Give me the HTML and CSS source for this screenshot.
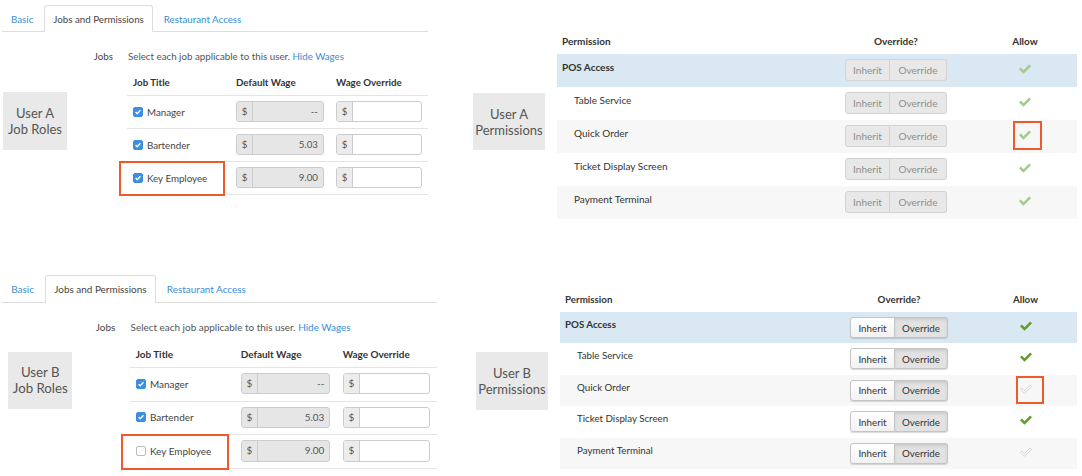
FILE: index.html
```html
<!DOCTYPE html>
<html lang="en">
<head>
  <meta charset="UTF-8">
  <meta name="viewport" content="width=device-width, initial-scale=1.0">
  <title>Job roles and permissions</title>
  <link rel="stylesheet" href="styles.css">
</head>
<body>
<div class="sheet">

  <!-- user A : jobs -->
  <section class="jobs">
    <div class="tabs">
      <a class="tab">Basic</a>
      <a class="tab active">Jobs and Permissions</a>
      <a class="tab">Restaurant Access</a>
    </div>
    <div class="jobs-body">
      <div class="jobs-side">
        <div class="jobs-label">Jobs</div>
        <div class="note">User A<br>Job Roles</div>
      </div>
      <div class="jobs-main">
        <p class="jobs-intro">Select each job applicable to this user. <a>Hide Wages</a></p>
        <div class="job-row job-head">
          <div class="cell">Job Title</div>
          <div class="cell">Default Wage</div>
          <div class="cell">Wage Override</div>
        </div>
        <div class="job-row">
          <div class="cell"><span class="box on"><svg viewBox="0 0 8 8"><path d="M1.6 4.1 3.2 5.7 6.4 2.3"/></svg></span>Manager</div>
          <div class="cell"><div class="money locked"><span class="addon">$</span><span class="val">--</span></div></div>
          <div class="cell"><div class="money"><span class="addon">$</span><span class="val"></span></div></div>
        </div>
        <div class="job-row">
          <div class="cell"><span class="box on"><svg viewBox="0 0 8 8"><path d="M1.6 4.1 3.2 5.7 6.4 2.3"/></svg></span>Bartender</div>
          <div class="cell"><div class="money locked"><span class="addon">$</span><span class="val">5.03</span></div></div>
          <div class="cell"><div class="money"><span class="addon">$</span><span class="val"></span></div></div>
        </div>
        <div class="job-row">
          <div class="cell"><span class="box on"><svg viewBox="0 0 8 8"><path d="M1.6 4.1 3.2 5.7 6.4 2.3"/></svg></span>Key Employee<span class="mark mark-job"></span></div>
          <div class="cell"><div class="money locked"><span class="addon">$</span><span class="val">9.00</span></div></div>
          <div class="cell"><div class="money"><span class="addon">$</span><span class="val"></span></div></div>
        </div>
      </div>
    </div>
  </section>

  <!-- user A : permissions -->
  <section class="perms">
    <div class="note">User A<br>Permissions</div>
    <div class="perm-table">
      <div class="perm-row perm-head">
        <div class="cell name">Permission</div>
        <div class="cell">Override?</div>
        <div class="cell allow">Allow</div>
      </div>
      <div class="perm-row group">
        <div class="cell name">POS Access</div>
        <div class="cell"><div class="toggle"><span class="inh">Inherit</span><span class="ovr">Override</span></div></div>
        <div class="cell allow"><svg class="tick faded" viewBox="0 0 12 10"><path d="M0 5.3 1.8 3.5 4.5 6.2 10.2 0.5 12 2.3 4.5 9.8z"/></svg></div>
      </div>
      <div class="perm-row">
        <div class="cell name sub">Table Service</div>
        <div class="cell"><div class="toggle"><span class="inh">Inherit</span><span class="ovr">Override</span></div></div>
        <div class="cell allow"><svg class="tick faded" viewBox="0 0 12 10"><path d="M0 5.3 1.8 3.5 4.5 6.2 10.2 0.5 12 2.3 4.5 9.8z"/></svg></div>
      </div>
      <div class="perm-row stripe">
        <div class="cell name sub">Quick Order</div>
        <div class="cell"><div class="toggle"><span class="inh">Inherit</span><span class="ovr">Override</span></div></div>
        <div class="cell allow"><svg class="tick faded" viewBox="0 0 12 10"><path d="M0 5.3 1.8 3.5 4.5 6.2 10.2 0.5 12 2.3 4.5 9.8z"/></svg><span class="mark mark-perm"></span></div>
      </div>
      <div class="perm-row">
        <div class="cell name sub">Ticket Display Screen</div>
        <div class="cell"><div class="toggle"><span class="inh">Inherit</span><span class="ovr">Override</span></div></div>
        <div class="cell allow"><svg class="tick faded" viewBox="0 0 12 10"><path d="M0 5.3 1.8 3.5 4.5 6.2 10.2 0.5 12 2.3 4.5 9.8z"/></svg></div>
      </div>
      <div class="perm-row stripe">
        <div class="cell name sub">Payment Terminal</div>
        <div class="cell"><div class="toggle"><span class="inh">Inherit</span><span class="ovr">Override</span></div></div>
        <div class="cell allow"><svg class="tick faded" viewBox="0 0 12 10"><path d="M0 5.3 1.8 3.5 4.5 6.2 10.2 0.5 12 2.3 4.5 9.8z"/></svg></div>
      </div>
    </div>
  </section>

  <!-- user B : jobs -->
  <section class="jobs jobs-b">
    <div class="tabs">
      <a class="tab">Basic</a>
      <a class="tab active">Jobs and Permissions</a>
      <a class="tab">Restaurant Access</a>
    </div>
    <div class="jobs-body">
      <div class="jobs-side">
        <div class="jobs-label">Jobs</div>
        <div class="note">User B<br>Job Roles</div>
      </div>
      <div class="jobs-main">
        <p class="jobs-intro">Select each job applicable to this user. <a>Hide Wages</a></p>
        <div class="job-row job-head">
          <div class="cell">Job Title</div>
          <div class="cell">Default Wage</div>
          <div class="cell">Wage Override</div>
        </div>
        <div class="job-row">
          <div class="cell"><span class="box on"><svg viewBox="0 0 8 8"><path d="M1.6 4.1 3.2 5.7 6.4 2.3"/></svg></span>Manager</div>
          <div class="cell"><div class="money locked"><span class="addon">$</span><span class="val">--</span></div></div>
          <div class="cell"><div class="money"><span class="addon">$</span><span class="val"></span></div></div>
        </div>
        <div class="job-row">
          <div class="cell"><span class="box on"><svg viewBox="0 0 8 8"><path d="M1.6 4.1 3.2 5.7 6.4 2.3"/></svg></span>Bartender</div>
          <div class="cell"><div class="money locked"><span class="addon">$</span><span class="val">5.03</span></div></div>
          <div class="cell"><div class="money"><span class="addon">$</span><span class="val"></span></div></div>
        </div>
        <div class="job-row">
          <div class="cell"><span class="box"></span>Key Employee<span class="mark mark-job"></span></div>
          <div class="cell"><div class="money locked"><span class="addon">$</span><span class="val">9.00</span></div></div>
          <div class="cell"><div class="money"><span class="addon">$</span><span class="val"></span></div></div>
        </div>
      </div>
    </div>
  </section>

  <!-- user B : permissions -->
  <section class="perms perms-b">
    <div class="note">User B<br>Permissions</div>
    <div class="perm-table">
      <div class="perm-row perm-head">
        <div class="cell name">Permission</div>
        <div class="cell">Override?</div>
        <div class="cell allow">Allow</div>
      </div>
      <div class="perm-row group">
        <div class="cell name">POS Access</div>
        <div class="cell"><div class="toggle"><span class="inh">Inherit</span><span class="ovr">Override</span></div></div>
        <div class="cell allow"><svg class="tick on" viewBox="0 0 12 10"><path d="M0 5.3 1.8 3.5 4.5 6.2 10.2 0.5 12 2.3 4.5 9.8z"/></svg></div>
      </div>
      <div class="perm-row">
        <div class="cell name sub">Table Service</div>
        <div class="cell"><div class="toggle"><span class="inh">Inherit</span><span class="ovr">Override</span></div></div>
        <div class="cell allow"><svg class="tick on" viewBox="0 0 12 10"><path d="M0 5.3 1.8 3.5 4.5 6.2 10.2 0.5 12 2.3 4.5 9.8z"/></svg></div>
      </div>
      <div class="perm-row stripe">
        <div class="cell name sub">Quick Order</div>
        <div class="cell"><div class="toggle"><span class="inh">Inherit</span><span class="ovr">Override</span></div></div>
        <div class="cell allow"><svg class="tick off" viewBox="0 0 12 10"><path d="M0.5 5.3 1.8 4 4.5 6.7 10.2 1 11.5 2.3 4.5 9.3z"/></svg><span class="mark mark-perm"></span></div>
      </div>
      <div class="perm-row">
        <div class="cell name sub">Ticket Display Screen</div>
        <div class="cell"><div class="toggle"><span class="inh">Inherit</span><span class="ovr">Override</span></div></div>
        <div class="cell allow"><svg class="tick on" viewBox="0 0 12 10"><path d="M0 5.3 1.8 3.5 4.5 6.2 10.2 0.5 12 2.3 4.5 9.8z"/></svg></div>
      </div>
      <div class="perm-row stripe">
        <div class="cell name sub">Payment Terminal</div>
        <div class="cell"><div class="toggle"><span class="inh">Inherit</span><span class="ovr">Override</span></div></div>
        <div class="cell allow"><svg class="tick off" viewBox="0 0 12 10"><path d="M0.5 5.3 1.8 4 4.5 6.7 10.2 1 11.5 2.3 4.5 9.3z"/></svg></div>
      </div>
    </div>
  </section>

</div>
</body>
</html>
```

FILE: styles.css
```css
body{
  margin: 0;
  background: #fff;
  font-family: Lato, "Liberation Sans", sans-serif;
  font-size: 10px;
  color: #333;
  overflow: hidden;
}
a{
  color: #3a8dd4;
  text-decoration: none;
  cursor: pointer;
}

.sheet{
  display: grid;
  grid-template-columns: 445px 637px;
  grid-template-rows: 262px 214px;
}

/* grey labels and red highlight boxes */
.note{
  display: flex;
  align-items: center;
  justify-content: center;
  flex: none;
  text-align: center;
  background: #e9e9e9;
  color: #555;
  font-size: 13px;
  line-height: 16px;
}
.mark{
  position: absolute;
  box-sizing: border-box;
  border: 2px solid #ee5a29;
}
.mark-job{
  left: -8px;
  top: -1px;
  width: 106px;
  height: 35px;
}
.mark-perm{
  left: 66px;
  top: 1px;
  width: 29px;
  height: 29px;
}
.perms-b .mark-perm{
  left: 68px;
  width: 28px;
  height: 28px;
}

/* jobs panel */
.jobs{
  width: 426px;
  padding: 5px 0 0 2px;
  font-size: 9.75px;
}
.jobs-b{
  zoom: 1.02;
  padding-top: 13px;
}
.tabs{
  display: flex;
  border-bottom: 1px solid #ddd;
}
.tab{
  height: 26px;
  line-height: 26px;
  padding: 0 8px;
  margin: 0 2px -1px 0;
  border: 1px solid transparent;
  border-bottom: 0;
  border-radius: 3px 3px 0 0;
}
.tab.active{
  color: #444;
  background: #fff;
  border-color: #ddd;
}
.jobs-body{
  display: flex;
}
.jobs-side{
  width: 125px;
  flex: none;
}
.jobs-label{
  margin-top: 17px;
  padding-right: 14px;
  text-align: right;
  line-height: 14px;
  color: #444;
}
.jobs-side .note{
  width: 64px;
  height: 58px;
  margin: 29px 0 0 1px;
}
.jobs-b .jobs-side .note{
  width: 63px;
  height: 56px;
  margin: 17px 0 0 6px;
}
.jobs-main{
  flex: 1;
}
.jobs-intro{
  margin: 17px 0 0;
  padding-left: 1px;
  line-height: 14px;
  color: #555;
}
.job-row{
  display: grid;
  grid-template-columns: 103px 100px 98px;
  border-bottom: 1px solid #e4e4e4;
}
.job-row .cell{
  position: relative;
  display: flex;
  align-items: center;
  padding: 5px 6px 6px;
  color: #444;
}
.job-head .cell{
  padding: 12px 6px 6px;
  line-height: 14px;
  font-weight: bold;
  color: #333;
}
.box{
  display: flex;
  align-items: center;
  justify-content: center;
  width: 10px;
  height: 10px;
  box-sizing: border-box;
  margin-right: 4px;
  border: 1px solid #bbb;
  border-radius: 2px;
  background: #fff;
}
.box.on{
  background: #3b8fe3;
  border-color: #3b8fe3;
}
.box svg{
  width: 8px;
  height: 8px;
  fill: none;
  stroke: #fff;
  stroke-width: 1.4;
}
.money{
  display: flex;
  width: 100%;
  height: 21px;
  box-sizing: border-box;
  border: 1px solid #ccc;
  border-radius: 3px;
  overflow: hidden;
  background: #fff;
  color: #555;
  line-height: 19px;
}
.money .addon{
  width: 15px;
  flex: none;
  text-align: center;
  background: #ececec;
  border-right: 1px solid #ccc;
}
.money .val{
  flex: 1;
  text-align: right;
  padding-right: 5px;
}
.money.locked,
.money.locked .addon{
  background: #e6e6e6;
}

/* permissions panel */
.perms{
  display: flex;
  align-items: flex-start;
  padding: 29px 0 0 28px;
}
.perms .note{
  width: 72px;
  height: 57px;
  margin: 64px 12px 0 0;
}
.perm-table{
  width: 520px;
}
.perm-row{
  display: grid;
  grid-template-columns: 288px 102px 1fr;
}
.perm-row .cell{
  position: relative;
  padding: 5px 0 6px;
  line-height: 14px;
}
.perm-row .name{
  padding: 6px 5px 0;
}
.perm-row .sub{
  padding-left: 17px;
}
.perm-head .cell{
  padding: 5px 0 6px;
  font-weight: bold;
  text-align: center;
}
.perm-head .name{
  padding-left: 5px;
  text-align: left;
}
.perm-row.group{
  background: #d9e8f2;
}
.perm-row.group .name{
  font-weight: bold;
}
.perm-row.stripe{
  background: #f7f7f7;
}
.perm-row .allow{
  display: flex;
  justify-content: center;
  padding: 10px 0 0 26px;
}
.perm-head .allow{
  padding: 5px 0 6px 26px;
}
.toggle{
  display: flex;
  height: 22px;
}
.toggle span{
  display: flex;
  align-items: center;
  justify-content: center;
  box-sizing: border-box;
  border: 1px solid #d3d3d3;
  background: #e8e8e8;
  color: #8e8e8e;
}
.toggle .inh{
  width: 45px;
  border-radius: 3px 0 0 3px;
}
.toggle .ovr{
  width: 57px;
  border-left: 0;
  border-radius: 0 3px 3px 0;
}
.tick{
  width: 12px;
  height: 10px;
}
.tick.faded{
  fill: #a7c98b;
}
.tick.on{
  fill: #65992e;
}
.tick.off{
  fill: #fff;
  stroke: #c6c6c6;
  stroke-width: 0.8;
}

/* user B permissions: overrides switched on */
.perms-b{
  padding: 25px 0 0 31px;
  font-size: 9.75px;
}
.perms-b .note{
  height: 58px;
  margin-top: 65px;
}
.perms-b .perm-table{
  width: 517px;
}
.perms-b .perm-row{
  grid-template-columns: 290px 98px 1fr;
}
.perms-b .perm-row .cell{
  padding-bottom: 5.4px;
}
.perms-b .perm-row .name{
  padding-top: 5px;
  padding-bottom: 0;
}
.perms-b .perm-row .allow{
  padding-top: 9px;
  padding-bottom: 0;
}
.perms-b .perm-head .cell{
  padding-bottom: 6px;
}
.perms-b .perm-head .allow{
  padding-top: 5px;
}
.perms-b .toggle{
  height: 21px;
  border-radius: 3px;
  box-shadow: 0 1px 1px rgba(0, 0, 0, 0.15);
}
.perms-b .toggle span{
  border-color: #c4c4c4;
  background: linear-gradient(#fff, #f2f2f2);
  color: #333;
}
.perms-b .toggle .inh{
  width: 45px;
}
.perms-b .toggle .ovr{
  width: 53px;
  background: #e2e2e2;
  box-shadow: inset 0 2px 3px rgba(0, 0, 0, 0.1);
}
```
